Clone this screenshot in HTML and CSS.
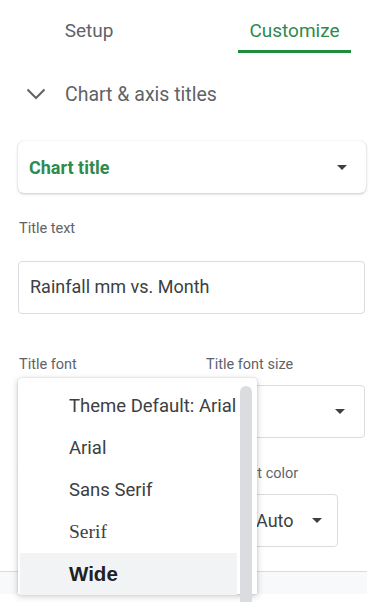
FILE: index.html
```html
<!DOCTYPE html>
<html>
<head>
<meta charset="utf-8">
<link rel="stylesheet" href="styles.css">
</head>
<body>
<div class="panel">
  <div class="tabs">
    <div class="tab tab-setup">Setup</div>
    <div class="tab tab-active">Customize</div>
  </div>
  <div class="section-head">
    <svg class="chev" width="20" height="12" viewBox="0 0 20 12"><path d="M1.5 1.5 L10 10 L18.5 1.5" fill="none" stroke="#5f6368" stroke-width="2"/></svg>
    <span>Chart &amp; axis titles</span>
  </div>
  <div class="card-select">
    <span class="card-text">Chart title</span>
    <span class="caret"></span>
  </div>
  <div class="label l-title">Title text</div>
  <div class="text-input">Rainfall mm vs. Month</div>
  <div class="grid">
    <div class="label">Title font</div>
    <div class="label">Title font size</div>
    <div class="select"><span class="caret"></span></div>
    <div class="select"><span class="caret"></span></div>
    <div class="label l2">Title format</div>
    <div class="label l2">Title text color</div>
    <div class="fmt"></div>
    <div class="select color-select"><span class="sel-text">Auto</span><span class="caret"></span></div>
  </div>
  <div class="footer"></div>
  <div class="menu">
    <div class="menu-list">
      <div class="item">Theme Default: Arial</div>
      <div class="item">Arial</div>
      <div class="item">Sans Serif</div>
      <div class="item serif">Serif</div>
      <div class="item wide hover">Wide</div>
    </div>
    <div class="scroll"><div class="thumb"></div></div>
  </div>
</div>
</body>
</html>
```

FILE: styles.css
```css
* { box-sizing: border-box; }
body { margin: 0; background: #fff; font-family: Roboto, "Noto Sans", sans-serif; }
.panel { position: relative; width: 377px; height: 602px; overflow: hidden; }
.tabs { display: flex; height: 53px; padding-left: 14px; }
.tab { height: 53px; padding-top: 10px; padding-bottom: 3px; display: flex; align-items: center; justify-content: center; font-size: 19px; color: #5f6368; white-space: nowrap; }
.tab-setup { width: 150px; }
.tab-active { width: 113px; margin-left: 74px; color: #2f8a4c; border-bottom: 3px solid #1e8e3e; padding-bottom: 0; }
.section-head { margin-top: 21px; height: 40px; display: flex; align-items: center; padding-left: 26px; gap: 19px; font-size: 19.5px; color: #5f6368; }
.card-select { margin: 27px 11px 0 18px; width: 348px; height: 52px; border-radius: 6px; box-shadow: 0 1px 3px rgba(60,64,67,.28), 0 0 1px rgba(60,64,67,.15); display: flex; align-items: center; justify-content: space-between; padding: 0 19px 0 11px; }
.card-text { font-size: 18px; font-weight: 700; color: #2f8a4c; }
.caret { width: 0; height: 0; border-left: 5px solid transparent; border-right: 5px solid transparent; border-top: 5px solid #3c4043; }
.label { font-size: 14.5px; color: #5f6368; height: 20px; line-height: 20px; white-space: nowrap; }
.l-title { margin: 26px 0 0 19px; }
.text-input { margin: 22px 0 0 18px; width: 347px; height: 53px; border: 1px solid #dadce0; border-radius: 4px; padding-left: 11px; padding-bottom: 2px; display: flex; align-items: center; font-size: 18px; color: #3c4043; }
.grid { display: grid; grid-template-columns: 172px 159px; column-gap: 16px; margin: 41px 0 0 18px; }
.grid .label:first-child { padding-left: 1px; }
.select { margin-top: 10px; height: 53px; border: 1px solid #dadce0; border-radius: 4px; display: flex; align-items: center; justify-content: flex-end; padding-right: 19px; }
.l2 { margin-top: 26px; }
.fmt { margin-top: 10px; height: 53px; }
.color-select { width: 132px; justify-content: flex-start; padding-left: 49px; padding-right: 0; gap: 18px; }
.sel-text { font-size: 18px; color: #3c4043; }
.footer { margin-top: 24px; width: 367px; height: 23px; border-top: 1px solid #dadce0; background: #f8f9fa; }
.menu { position: absolute; left: 18px; top: 378px; width: 239px; height: 216px; background: #fff; border-radius: 4px 4px 0 0; box-shadow: 0 2px 6px rgba(60,64,67,.3), 0 0 2px rgba(60,64,67,.2); display: flex; }
.menu-list { width: 219px; padding: 7px 0 0 2px; }
.item { height: 42px; display: flex; align-items: center; padding-left: 49px; font-size: 18.5px; color: #3c4043; white-space: nowrap; }
.serif { font-family: "Liberation Serif", serif; font-size: 19.5px; }
.wide { font-family: "Liberation Sans", Arial, sans-serif; font-weight: 700; font-size: 20.5px; color: #202124; }
.hover { background: #f1f3f4; }
.scroll { width: 20px; padding: 8px 5px 0 3px; }
.thumb { width: 12px; height: 220px; background: #dadce0; border-radius: 6px 6px 0 0; }
```
